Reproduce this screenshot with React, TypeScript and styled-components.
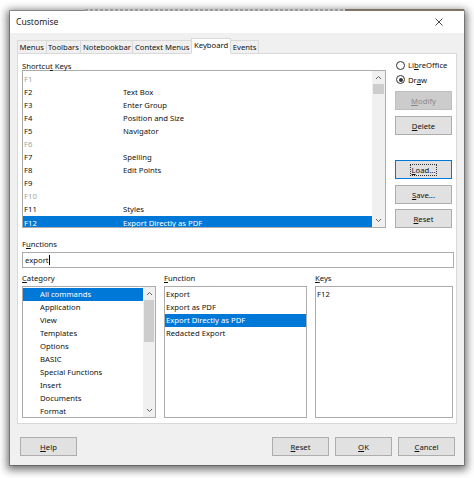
import React from "react";
import styled, { createGlobalStyle } from "styled-components";

const GlobalStyle = createGlobalStyle`
  html, body {
    margin: 0;
    padding: 0;
    background: #ffffff;
  }
  body {
    font-family: "Noto Sans", "Open Sans", sans-serif;
    font-size: 7.7px;
    color: #111111;
  }
  * {
    box-sizing: border-box;
  }
  u {
    text-decoration-thickness: 1px;
    text-underline-offset: 1px;
  }
`;

const shortcuts = [
  { key: "F1", label: "", disabled: true },
  { key: "F2", label: "Text Box" },
  { key: "F3", label: "Enter Group" },
  { key: "F4", label: "Position and Size" },
  { key: "F5", label: "Navigator" },
  { key: "F6", label: "", disabled: true },
  { key: "F7", label: "Spelling" },
  { key: "F8", label: "Edit Points" },
  { key: "F9", label: "" },
  { key: "F10", label: "", disabled: true },
  { key: "F11", label: "Styles" },
  { key: "F12", label: "Export Directly as PDF", selected: true },
];

const categories = [
  "All commands",
  "Application",
  "View",
  "Templates",
  "Options",
  "BASIC",
  "Special Functions",
  "Insert",
  "Documents",
  "Format",
];

const functions = ["Export", "Export as PDF", "Export Directly as PDF", "Redacted Export"];

const tabs = ["Menus", "Toolbars", "Notebookbar", "Context Menus", "Keyboard", "Events"];

const Chevron = ({ down }: { down?: boolean }) => (
  <svg width="7" height="5" viewBox="0 0 7 5">
    <polyline
      points={down ? "1,1 3.5,3.5 6,1" : "1,4 3.5,1.5 6,4"}
      fill="none"
      stroke="#606060"
      strokeWidth="1"
    />
  </svg>
);

const App = () => {
  return (
    <Page>
      <GlobalStyle />
      <BehindStrip>
        <StripLight />
        <StripDark />
      </BehindStrip>
      <Dialog>
        <TitleBar>
          <Title>Customise</Title>
          <svg width="8" height="8" viewBox="0 0 8 8">
            <path d="M0.5 0.5 L7.5 7.5 M7.5 0.5 L0.5 7.5" stroke="#333" strokeWidth="0.9" />
          </svg>
        </TitleBar>
        <Body>
          <Tabs>
            {tabs.map((t) => (
              <Tab key={t} $active={t === "Keyboard"}>
                {t}
              </Tab>
            ))}
          </Tabs>
          <Panel>
            <TopSection>
              <div>
                <Label $h={12} $pt={3}>
                  Shortcu<u>t</u> Keys
                </Label>
                <ListBox $h={158}>
                  <Rows $pt={1}>
                    {shortcuts.map((s) => (
                      <ShortcutRow key={s.key} $selected={s.selected} $disabled={s.disabled}>
                        <span>{s.key}</span>
                        <span>{s.label}</span>
                      </ShortcutRow>
                    ))}
                  </Rows>
                  <ScrollBar $w={13}>
                    <Arrow>
                      <Chevron />
                    </Arrow>
                    <Thumb $h={10} />
                    <Spacer />
                    <Arrow>
                      <Chevron down />
                    </Arrow>
                  </ScrollBar>
                </ListBox>
              </div>
              <SideColumn>
                <RadioRow>
                  <Radio />
                  <span>
                    Li<u>b</u>reOffice
                  </span>
                </RadioRow>
                <RadioRow>
                  <Radio $checked />
                  <span>
                    Dr<u>a</u>w
                  </span>
                </RadioRow>
                <Button $mt={4} $disabled>
                  <u>M</u>odify
                </Button>
                <Button $mt={6}>
                  <u>D</u>elete
                </Button>
                <Button $mt={25} $focused>
                  <FocusRing>
                    <u>L</u>oad...
                  </FocusRing>
                </Button>
                <Button $mt={6}>
                  <u>S</u>ave...
                </Button>
                <Button $mt={5}>
                  <u>R</u>eset
                </Button>
              </SideColumn>
            </TopSection>

            <Label $h={11} $mt={10} $pt={1}>
              F<u>u</u>nctions
            </Label>
            <SearchInput>
              export<Caret />
            </SearchInput>

            <Columns>
              <div>
                <Label $h={13} $pt={0}>
                  <u>C</u>ategory
                </Label>
                <ListBox $h={132}>
                  <Rows $pt={1}>
                    {categories.map((c, i) => (
                      <ItemRow key={c} $indent={17} $selected={i === 0}>
                        {c}
                      </ItemRow>
                    ))}
                  </Rows>
                  <ScrollBar $w={12}>
                    <Arrow>
                      <Chevron />
                    </Arrow>
                    <Thumb $h={42} />
                    <Spacer />
                    <Arrow>
                      <Chevron down />
                    </Arrow>
                  </ScrollBar>
                </ListBox>
              </div>
              <div>
                <Label $h={13} $pt={0}>
                  <u>F</u>unction
                </Label>
                <ListBox $h={132}>
                  <Rows $pt={1}>
                    {functions.map((f, i) => (
                      <ItemRow key={f} $indent={1} $selected={i === 2}>
                        {f}
                      </ItemRow>
                    ))}
                  </Rows>
                </ListBox>
              </div>
              <div>
                <Label $h={13} $pt={0}>
                  <u>K</u>eys
                </Label>
                <ListBox $h={132}>
                  <Rows $pt={1}>
                    <ItemRow $indent={1}>F12</ItemRow>
                  </Rows>
                </ListBox>
              </div>
            </Columns>
          </Panel>

          <Footer>
            <Button>
              <u>H</u>elp
            </Button>
            <FooterRight>
              <Button>
                <u>R</u>eset
              </Button>
              <Button>
                <u>O</u>K
              </Button>
              <Button>
                <u>C</u>ancel
              </Button>
            </FooterRight>
          </Footer>
        </Body>
      </Dialog>
    </Page>
  );
};

export default App;

const Page = styled.div`
  width: 474px;
  height: 478px;
  padding: 9px 10px 0 10px;
  overflow: hidden;
`;

const BehindStrip = styled.div`
  margin-left: 75px;
  height: 2px;
  display: flex;
`;

const StripLight = styled.div`
  width: 260px;
  background: repeating-linear-gradient(90deg, #9a9a9a 0 3px, #c8c8c8 3px 5px);
`;

const StripDark = styled.div`
  flex: 1;
  background: #7d7466;
`;

const Dialog = styled.div`
  width: 454px;
  background: #f0f0f0;
  box-shadow: 0 0 0 1px rgba(0, 0, 0, 0.25), 0 2px 8px 3px rgba(0, 0, 0, 0.55);
`;

const TitleBar = styled.div`
  height: 22px;
  background: #ffffff;
  display: flex;
  align-items: center;
  justify-content: space-between;
  padding: 0 21px 0 6px;
`;

const Title = styled.span`
  font-size: 8.6px;
  color: #222;
`;

const Body = styled.div`
  padding: 5px 7px 9px 7px;
`;

const Tabs = styled.div`
  display: flex;
  align-items: flex-end;
  height: 16px;
  padding-left: 1px;
`;

const Tab = styled.div<{ $active?: boolean }>`
  height: ${(p) => (p.$active ? 16 : 14)}px;
  line-height: ${(p) => (p.$active ? 13 : 12)}px;
  padding: 0 ${(p) => (p.$active ? 2 : 1.5)}px;
  margin-left: -1px;
  border: 1px solid #d9d9d9;
  border-bottom: ${(p) => (p.$active ? "1px solid #ffffff" : "none")};
  background: ${(p) => (p.$active ? "#ffffff" : "#f0f0f0")};
  position: relative;
  z-index: ${(p) => (p.$active ? 2 : 0)};
  white-space: nowrap;
`;

const Panel = styled.div`
  width: 440px;
  height: 371px;
  margin-top: -1px;
  background: #ffffff;
  border: 1px solid #d9d9d9;
  padding: 4px 2px 5px 4px;
  position: relative;
  z-index: 1;
`;

const TopSection = styled.div`
  display: grid;
  grid-template-columns: 364px 57px;
  column-gap: 9px;
`;

const Label = styled.div<{ $h: number; $mt?: number; $pt: number }>`
  height: ${(p) => p.$h}px;
  margin-top: ${(p) => p.$mt || 0}px;
  padding-top: ${(p) => p.$pt}px;
  line-height: 10px;
  white-space: nowrap;
`;

const ListBox = styled.div<{ $h: number }>`
  height: ${(p) => p.$h}px;
  border: 1px solid #acacac;
  background: #ffffff;
  display: flex;
  overflow: hidden;
`;

const Rows = styled.div<{ $pt: number }>`
  flex: 1;
  padding-top: ${(p) => p.$pt}px;
`;

const ShortcutRow = styled.div<{ $selected?: boolean; $disabled?: boolean }>`
  height: 13.1px;
  display: grid;
  grid-template-columns: 99px 1fr;
  align-items: center;
  padding-left: 1px;
  background: ${(p) => (p.$selected ? "#0078d7" : "transparent")};
  color: ${(p) => (p.$selected ? "#ffffff" : p.$disabled ? "#a3a3a3" : "#111111")};
`;

const ItemRow = styled.div<{ $selected?: boolean; $indent: number }>`
  height: 13px;
  line-height: 13px;
  padding-left: ${(p) => p.$indent}px;
  white-space: nowrap;
  background: ${(p) => (p.$selected ? "#0078d7" : "transparent")};
  color: ${(p) => (p.$selected ? "#ffffff" : "#111111")};
`;

const ScrollBar = styled.div<{ $w: number }>`
  width: ${(p) => p.$w}px;
  background: #f0f0f0;
  display: flex;
  flex-direction: column;
`;

const Arrow = styled.div`
  height: 13px;
  display: flex;
  align-items: center;
  justify-content: center;
`;

const Thumb = styled.div<{ $h: number }>`
  height: ${(p) => p.$h}px;
  margin: 0 1px;
  background: #cdcdcd;
`;

const Spacer = styled.div`
  flex: 1;
`;

const SideColumn = styled.div`
  display: flex;
  flex-direction: column;
`;

const RadioRow = styled.div`
  height: 14.5px;
  display: flex;
  align-items: center;
  gap: 3px;
  padding-left: 1px;
`;

const Radio = styled.span<{ $checked?: boolean }>`
  width: 9px;
  height: 9px;
  border-radius: 50%;
  border: 1px solid #333;
  background: #fff;
  display: flex;
  align-items: center;
  justify-content: center;
  &::after {
    content: "";
    width: 4px;
    height: 4px;
    border-radius: 50%;
    background: ${(p) => (p.$checked ? "#333" : "transparent")};
  }
`;

const Button = styled.div<{ $mt?: number; $disabled?: boolean; $focused?: boolean }>`
  width: 57px;
  height: 19px;
  margin-top: ${(p) => p.$mt || 0}px;
  display: flex;
  align-items: center;
  justify-content: center;
  white-space: pre;
  background: ${(p) => (p.$disabled ? "#cccccc" : "#e1e1e1")};
  border: 1px solid ${(p) => (p.$disabled ? "#bfbfbf" : p.$focused ? "#0078d7" : "#adadad")};
  color: ${(p) => (p.$disabled ? "#8a8a8a" : "#111111")};
`;

const FocusRing = styled.span`
  outline: 1px dotted #333;
  outline-offset: 0;
  padding: 0 1px;
  line-height: 10px;
`;

const SearchInput = styled.div`
  margin-top: 3px;
  height: 16px;
  border: 1px solid #acacac;
  padding-left: 2px;
  display: flex;
  align-items: center;
`;

const Caret = styled.span`
  width: 1px;
  height: 10px;
  background: #000;
`;

const Columns = styled.div`
  margin-top: 5px;
  display: grid;
  grid-template-columns: 134px 143px 138px;
  column-gap: 8px;
`;

const Footer = styled.div`
  padding: 13px 2px 0 3px;
  display: flex;
  justify-content: space-between;
`;

const FooterRight = styled.div`
  display: flex;
  gap: 6px;
`;
